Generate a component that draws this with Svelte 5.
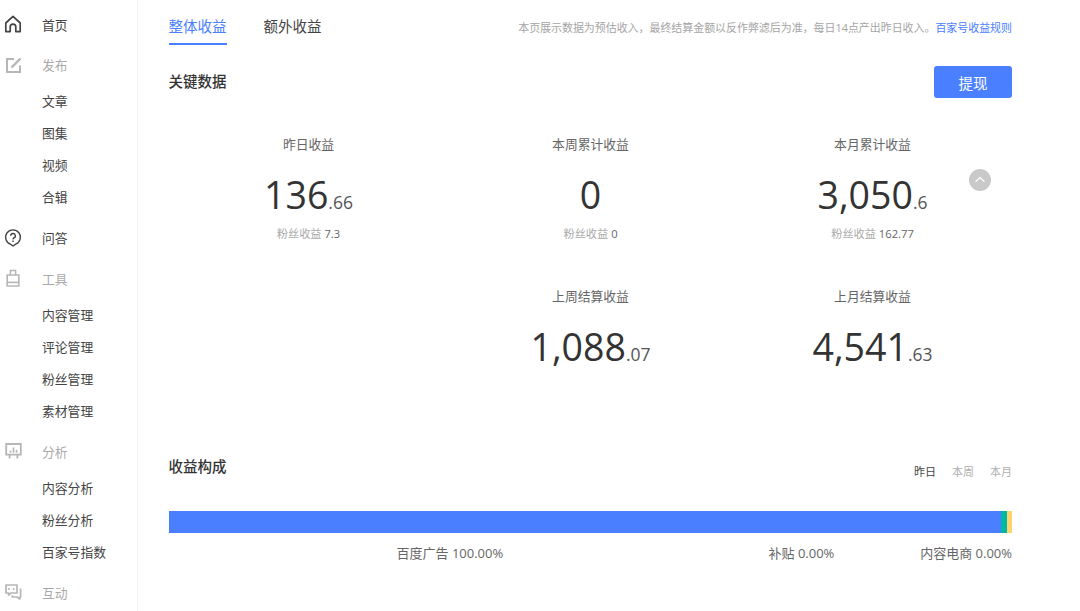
<script>
  const nav = [
    { t: '首页', kind: 'top', icon: 'home', dark: true },
    { t: '发布', kind: 'top', icon: 'edit' },
    { t: '文章' }, { t: '图集' }, { t: '视频' }, { t: '合辑' },
    { t: '问答', kind: 'top', icon: 'help', dark: true },
    { t: '工具', kind: 'top', icon: 'bag' },
    { t: '内容管理' }, { t: '评论管理' }, { t: '粉丝管理' }, { t: '素材管理' },
    { t: '分析', kind: 'top', icon: 'chart' },
    { t: '内容分析' }, { t: '粉丝分析' }, { t: '百家号指数' },
    { t: '互动', kind: 'top', icon: 'chat' }
  ];
  const row1 = [
    { label: '昨日收益', big: '136', small: '.66', sub: '粉丝收益', subv: '7.3' },
    { label: '本周累计收益', big: '0', small: '', sub: '粉丝收益', subv: '0' },
    { label: '本月累计收益', big: '3,050', small: '.6', sub: '粉丝收益', subv: '162.77' }
  ];
  const row2 = [
    null,
    { label: '上周结算收益', big: '1,088', small: '.07' },
    { label: '上月结算收益', big: '4,541', small: '.63' }
  ];
</script>

<div class="page">
  <aside class="side">
    {#each nav as n}
      {#if n.kind === 'top'}
        <div class="top" class:dark={n.dark}>
          <svg class="ico" viewBox="0 0 18 18" fill="none" stroke="currentColor" stroke-width="1.7">
            {#if n.icon === 'home'}
              <path d="M1.8 8 9 1.4 16.2 8V16.6H11.8V12A2.8 2.8 0 0 0 6.2 12V16.6H1.8Z" stroke-linejoin="round" />
            {:else if n.icon === 'edit'}
              <path d="M16 9.5V16H3V3H10" stroke-width="2" /><path d="M7.5 11.5 16.5 2.5" stroke-width="2.4" />
            {:else if n.icon === 'help'}
              <path d="M9 17 6.3 15.1A7.4 7.4 0 1 1 11.7 15.1Z" stroke-width="1.3" stroke-linejoin="round" />
              <path d="M6.7 6.8A2.3 2.3 0 1 1 9.7 9C9.1 9.4 9 9.8 9 10.6" stroke-width="1.4" /><path d="M9 11.4V13" stroke-width="1.4" />
            {:else if n.icon === 'bag'}
              <path d="M3.2 6H14.8V17H3.2Z" stroke-width="1.6" /><path d="M6.4 6V1.6H11.6V6" stroke-width="1.5" /><path d="M3.2 13.4H14.8" stroke-width="1.6" />
            {:else if n.icon === 'chart'}
              <path d="M2.2 2H16.8V12.6H2.2Z" stroke-width="1.8" /><path d="M5.6 12.6V16.4M13.4 12.6V16.4" stroke-width="1.8" /><path d="M6.5 10.8V8.6M9.5 10.8V5.6M12.5 10.8V7.8" stroke-width="1.6" />
            {:else}
              <path d="M2 2H13V10H7L4.6 12V10H2Z" stroke-width="1.7" stroke-linejoin="round" /><path d="M15.6 6.4H16.6V14H15.8V16L13 14H8.4V12.2" stroke-width="1.7" stroke-linejoin="round" />
              <path d="M5 5V7M9.6 5V7" stroke-width="1.6" />
            {/if}
          </svg>
          <span>{n.t}</span>
        </div>
      {:else}
        <div class="sub">{n.t}</div>
      {/if}
    {/each}
  </aside>

  <main class="main">
    <div class="tabs">
      <div class="tab on">整体收益</div>
      <div class="tab">额外收益</div>
      <div class="note">本页展示数据为预估收入，最终结算金额以反作弊滤后为准，每日14点产出昨日收入。<span class="link">百家号收益规则</span></div>
    </div>

    <div class="head">
      <h2>关键数据</h2>
      <div class="btn">提现</div>
    </div>

    <div class="grid">
      {#each [...row1, ...row2] as c}
        <div class="cell">
          {#if c}
            <div class="lab">{c.label}</div>
            <div class="num"><span class="big">{c.big}</span><span class="small">{c.small}</span></div>
            {#if c.sub}<div class="fans"><span>{c.sub}</span> <b>{c.subv}</b></div>{/if}
          {/if}
        </div>
      {/each}
      <div class="fold">
        <svg viewBox="0 0 22 22" fill="none" stroke="#fff" stroke-width="1.3"><path d="M6.5 12.8 11 8.6 15.5 12.8" /></svg>
      </div>
    </div>

    <div class="comp">
      <h2>收益构成</h2>
      <div class="range"><span class="cur">昨日</span><span>本周</span><span>本月</span></div>
    </div>

    <div class="bar"><i class="b1"></i><i class="b2"></i><i class="b3"></i></div>

    <div class="legend">
      <span class="l1">百度广告 100.00%</span>
      <span class="l2">补贴 0.00%</span>
      <span class="l3">内容电商 0.00%</span>
    </div>
  </main>
</div>

<style>
  :global(body) { margin: 0; background: #fff; }
  .page {
    display: flex; width: 1080px; height: 611px; overflow: hidden;
    font-family: "Open Sans", "Noto Sans CJK SC", sans-serif; color: #333;
  }
  .side {
    width: 137px; flex: none; border-right: 1px solid #f1f2f6; box-sizing: content-box;
    padding-top: 8px; font-size: 12.8px;
  }
  .top { display: flex; align-items: center; height: 32px; margin-top: 8.6px; color: #aaa; }
  .top:first-child { margin-top: 0; }
  .top + .sub { margin-top: 4.4px; }
  .top.dark { color: #444; }
  .ico { width: 18px; height: 18px; margin-left: 4px; margin-right: 20px; flex: none; }
  .top:not(.dark) .ico { opacity: .85; }
  .sub { height: 32px; line-height: 32px; padding-left: 42px; color: #444; }
  .main { flex: 1; padding: 0 68px 0 30.5px; min-width: 0; }
  .tabs { display: flex; align-items: flex-start; height: 66px; }
  .tab { font-size: 14.5px; line-height: 20px; padding-top: 17px; height: 26px; margin-right: 37px; color: #444; }
  .tab.on { color: #4a80ff; border-bottom: 2px solid #4a80ff; }
  .note { margin-left: auto; margin-top: 20px; font-size: 10.95px; line-height: 16px; color: #a5a5a5; white-space: nowrap; }
  .link { color: #4a80ff; }
  .head { display: flex; justify-content: space-between; align-items: flex-start; height: 61px; }
  h2 { margin: 0; font-size: 14.5px; line-height: 20px; font-weight: 500; color: #333; margin-top: 6px; }
  .btn {
    width: 78px; height: 32px; line-height: 35px; text-align: center; color: #fff; font-size: 14.5px;
    background: #4a80ff; border-radius: 3px;
  }
  .grid {
    position: relative; display: grid; grid-template-columns: 282px 282px 282px;
    grid-template-rows: 152px 150px; margin-left: -1px; margin-top: 9px;
  }
  .cell { text-align: center; width: 282px; }
  .lab { font-size: 12.8px; line-height: 16px; color: #666; }
  .num { margin-top: 21px; line-height: 44px; height: 44px; color: #333; white-space: nowrap; }
  .big { font-size: 37.5px; }
  .small { font-size: 17.5px; color: #555; }
  .fans { margin-top: 10px; font-size: 11.2px; line-height: 14px; color: #aaa; }
  .fans b { font-weight: 400; color: #666; }
  .fold {
    position: absolute; left: 801px; top: 33px; width: 22px; height: 22px; border-radius: 50%;
    background: #c9c9c9;
  }
  .fold svg { display: block; }
  .comp { display: flex; justify-content: space-between; align-items: flex-start; height: 54px; margin-top: 19px; }
  .comp h2 { margin-top: 0; }
  .range { display: flex; gap: 16px; font-size: 11px; line-height: 16px; color: #b0b0b0; margin-top: 7px; }
  .cur { color: #444; }
  .bar { display: flex; height: 22px; }
  .bar i { display: block; height: 100%; }
  .b1 { flex: 1; background: #4a80ff; }
  .b2 { width: 5.5px; background: #00b8a4; }
  .b3 { width: 5.5px; background: #ffd36e; }
  .legend { position: relative; height: 20px; margin-top: 11px; font-size: 13px; line-height: 18px; color: #666; }
  .legend span { position: absolute; top: 0; white-space: nowrap; }
  .l1 { left: 228px; }
  .l2 { left: 600px; }
  .l3 { right: 0; }
</style>
